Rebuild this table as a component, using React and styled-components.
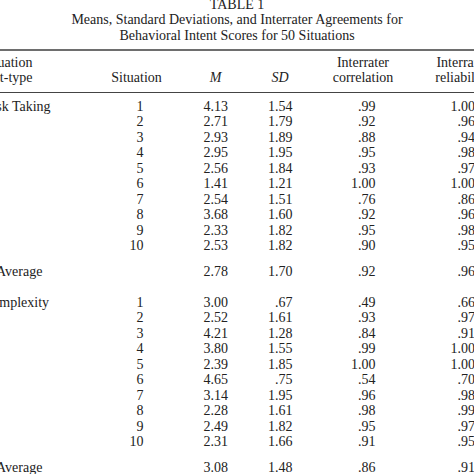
import React from "react";
import styled, { createGlobalStyle } from "styled-components";

const Global = createGlobalStyle`
  html, body { margin: 0; padding: 0; background: #fff; }
  body { overflow: hidden; width: 474px; height: 474px; }
  #root { width: 474px; height: 474px; overflow: hidden; }
`;

const TEMPLATE = "127px 65px 93px 36px 130px 69px";

const Page = styled.div`
  width: 474px;
  height: 474px;
  overflow: hidden;
  font-family: "Liberation Serif", "Times New Roman", serif;
  font-size: 14px;
  color: #222;
`;

const Caption = styled.div`
  margin-top: -3.5px;
  text-align: center;
  line-height: 15.5px;
`;

const CaptionLine = styled.div``;

const Table = styled.div`
  margin-top: 6px;
  margin-left: -23px;
  width: 520px;
  border-top: 2px solid #6e6e6e;
`;

const HeadRow = styled.div`
  display: grid;
  grid-template-columns: ${TEMPLATE};
  padding: 4.3px 0 7.2px;
  line-height: 15px;
  border-bottom: 1px solid #444;
`;

const HeadCell = styled.div`
  align-self: end;
  text-align: ${(p) => (p.$left ? "left" : "center")};
  font-style: ${(p) => (p.$italic ? "italic" : "normal")};
  white-space: nowrap;
`;

const StackedLabel = styled.span`
  display: inline-block;
  text-align: right;
`;

const Body = styled.div`
  padding-top: 5.5px;
`;

const Group = styled.div`
  & + & {
    margin-top: 15.5px;
  }
`;

const Row = styled.div`
  display: grid;
  grid-template-columns: ${TEMPLATE};
  line-height: 15.5px;
  margin-top: ${(p) => (p.$summary ? "10px" : "0")};
`;

const Label = styled.div`
  padding-left: ${(p) => (p.$indent ? "19px" : "6px")};
  white-space: nowrap;
`;

const NumCell = styled.div`
  display: flex;
  justify-content: center;
`;

const Num = styled.span`
  display: inline-block;
  width: ${(p) => p.$w}px;
  text-align: right;
  white-space: nowrap;
`;

const groups = [
  {
    name: "Risk Taking",
    rows: [
      ["4.13", "1.54", ".99", "1.00"],
      ["2.71", "1.79", ".92", ".96"],
      ["2.93", "1.89", ".88", ".94"],
      ["2.95", "1.95", ".95", ".98"],
      ["2.56", "1.84", ".93", ".97"],
      ["1.41", "1.21", "1.00", "1.00"],
      ["2.54", "1.51", ".76", ".86"],
      ["3.68", "1.60", ".92", ".96"],
      ["2.33", "1.82", ".95", ".98"],
      ["2.53", "1.82", ".90", ".95"],
    ],
    avg: ["2.78", "1.70", ".92", ".96"],
  },
  {
    name: "Complexity",
    rows: [
      ["3.00", ".67", ".49", ".66"],
      ["2.52", "1.61", ".93", ".97"],
      ["4.21", "1.28", ".84", ".91"],
      ["3.80", "1.55", ".99", "1.00"],
      ["2.39", "1.85", "1.00", "1.00"],
      ["4.65", ".75", ".54", ".70"],
      ["3.14", "1.95", ".96", ".98"],
      ["2.28", "1.61", ".98", ".99"],
      ["2.49", "1.82", ".95", ".97"],
      ["2.31", "1.66", ".91", ".95"],
    ],
    avg: ["3.08", "1.48", ".86", ".91"],
  },
];

function Values({ values }) {
  return values.map((v, i) => (
    <NumCell key={i}>
      <Num $w={25}>{v}</Num>
    </NumCell>
  ));
}

export default function App() {
  return (
    <Page>
      <Global />
      <Caption>
        <CaptionLine>TABLE 1</CaptionLine>
        <CaptionLine>
          Means, Standard Deviations, and Interrater Agreements for
        </CaptionLine>
        <CaptionLine>Behavioral Intent Scores for 50 Situations</CaptionLine>
      </Caption>
      <Table>
        <HeadRow>
          <HeadCell $left>
            <StackedLabel>
              Situation
              <br />
              Trait-type
            </StackedLabel>
          </HeadCell>
          <HeadCell>Situation</HeadCell>
          <HeadCell $italic>M</HeadCell>
          <HeadCell $italic>SD</HeadCell>
          <HeadCell>
            Interrater
            <br />
            correlation
          </HeadCell>
          <HeadCell>
            Interrater
            <br />
            reliability
          </HeadCell>
        </HeadRow>
        <Body>
          {groups.map((g) => (
            <Group key={g.name}>
              {g.rows.map((r, i) => (
                <Row key={i}>
                  <Label>{i === 0 ? g.name : ""}</Label>
                  <NumCell>
                    <Num $w={14}>{i + 1}</Num>
                  </NumCell>
                  <Values values={r} />
                </Row>
              ))}
              <Row $summary>
                <Label $indent>Average</Label>
                <NumCell />
                <Values values={g.avg} />
              </Row>
            </Group>
          ))}
        </Body>
      </Table>
    </Page>
  );
}
